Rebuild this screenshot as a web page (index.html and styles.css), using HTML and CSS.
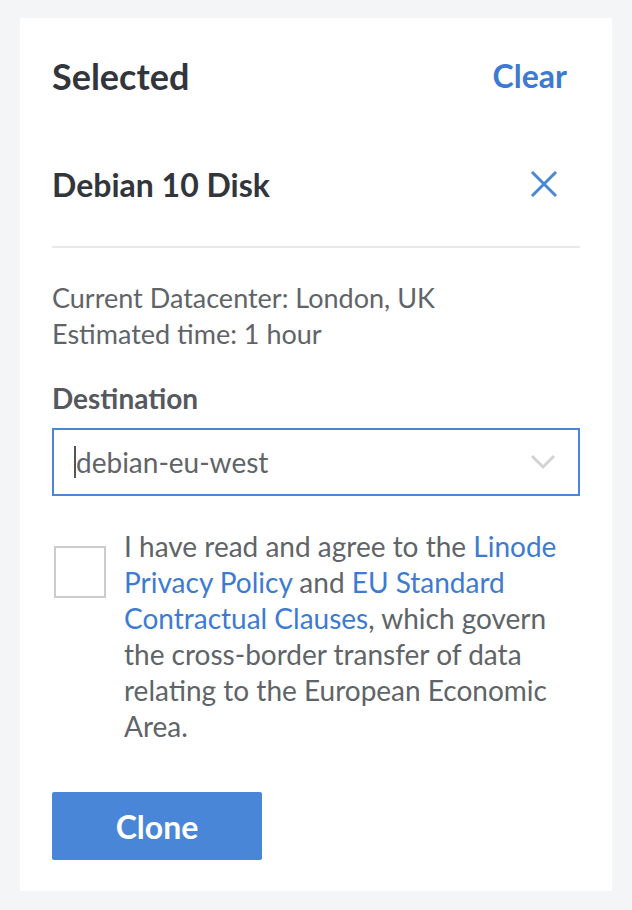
FILE: index.html
```html
<!DOCTYPE html>
<html>
<head>
<meta charset="utf-8">
<link rel="stylesheet" href="styles.css">
</head>
<body>
<div class="card">
  <div class="header">
    <h2 class="title">Selected</h2>
    <a class="clear">Clear</a>
  </div>
  <div class="item">
    <h3 class="item-title">Debian 10 Disk</h3>
    <svg class="close" width="28" height="28" viewBox="0 0 28 28"><path d="M2 2 L26 26 M26 2 L2 26" stroke="#4a86d7" stroke-width="3" fill="none"/></svg>
  </div>
  <div class="divider"></div>
  <div class="info">
    <div>Current Datacenter: London, UK</div>
    <div>Estimated time: 1 hour</div>
  </div>
  <div class="label">Destination</div>
  <div class="select">
    <span class="caret"></span><span class="value">debian-eu-west</span>
    <svg class="chev" width="26" height="16" viewBox="0 0 26 16"><path d="M2 2 L13 13 L24 2" stroke="#d2d3d4" stroke-width="3" fill="none"/></svg>
  </div>
  <div class="agree">
    <span class="checkbox"></span>
    <p class="agree-text">I have read and agree to the <a>Linode Privacy Policy</a> and <a>EU Standard Contractual Clauses</a>, which govern the cross-border transfer of data relating to the European Economic Area.</p>
  </div>
  <button class="btn">Clone</button>
</div>
</body>
</html>
```
FILE: styles.css
```css
html, body { margin: 0; padding: 0; }
body {
  background: #f4f5f6;
  font-family: Lato, "Open Sans", sans-serif;
  padding: 18px 20px 0 20px;
  height: 910px;
  box-sizing: border-box;
}
.card {
  background: #fff;
  width: 592px;
  height: 873px;
  box-sizing: border-box;
  padding: 0 32px;
  display: flex;
  flex-direction: column;
}
.header {
  display: flex;
  justify-content: space-between;
  align-items: center;
  height: 116px;
  padding-right: 13px;
}
.title {
  margin: 0;
  font-size: 36px;
  line-height: 40px;
  font-weight: 700;
  color: #32363c;
}
.clear {
  font-size: 32px;
  line-height: 40px;
  font-weight: 700;
  color: #3d7bd2;
}
.item {
  display: flex;
  justify-content: space-between;
  align-items: center;
  height: 100px;
  padding-right: 22px;
}
.item-title {
  margin: 0;
  font-size: 32px;
  font-weight: 700;
  color: #32363c;
}
.close { display: block; }
.divider {
  height: 2px;
  background: #e7e8ea;
  margin-top: 12px;
}
.info {
  margin-top: 32px;
  font-size: 27px;
  line-height: 36px;
  color: #606469;
}
.label {
  margin-top: 28px;
  font-size: 28px;
  font-weight: 700;
  color: #55595f;
  line-height: 36px;
}
.select {
  margin-top: 12px;
  height: 68px;
  border: 2px solid #4a86d7;
  box-sizing: border-box;
  display: flex;
  align-items: center;
  padding: 0 22px 0 20px;
  font-size: 28px;
  color: #606469;
}
.caret {
  width: 2px;
  height: 32px;
  background: #555;
}
.value { flex: 1; }
.chev { display: block; }
.agree {
  display: flex;
  margin-top: 32px;
  gap: 18px;
}
.checkbox {
  flex: none;
  width: 52px;
  height: 52px;
  border: 2px solid #ccc;
  box-sizing: border-box;
  margin-top: 18px;
  margin-left: 2px;
}
.agree-text {
  margin: 0;
  font-size: 28px;
  line-height: 36px;
  color: #606469;
}
.agree-text a { color: #3d7bd2; }
.btn {
  margin-top: 48px;
  width: 210px;
  height: 68px;
  background: #4a86d7;
  border: none;
  border-radius: 2px;
  color: #fff;
  font-family: Lato, sans-serif;
  font-size: 32px;
  font-weight: 700;
}
```
